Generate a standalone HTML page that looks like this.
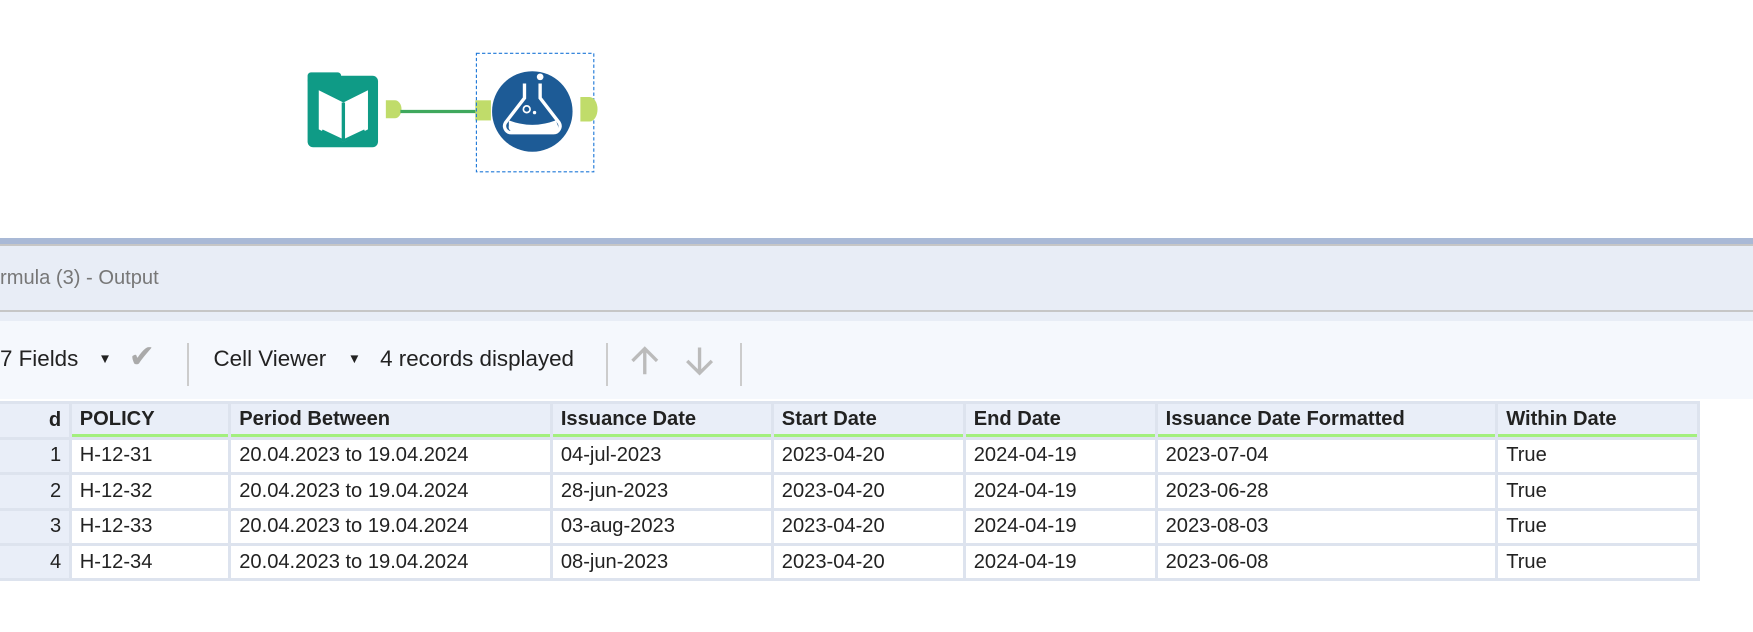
<!DOCTYPE html>
<html><head><style>
body{margin:0;width:1753px;height:631px;background:#fff;overflow:hidden;font-family:"Liberation Sans",sans-serif;}
#w{zoom:1.118;position:relative;width:1568px;height:565px}
.abs{position:absolute}
table{border-collapse:separate;border-spacing:3px;background:#dde3ee;position:absolute;left:-3px;top:359px;font-size:18px;color:#222}
td,th{padding:0 7px;white-space:nowrap;height:29px}
th{background:#e9eef8;text-align:left;font-weight:bold;border-bottom:3px solid #a3ef7e;height:26px}
td{background:#fff}
th.r,td.r{background:#e9eef8;text-align:right;border-bottom:none}
th.r{height:29px}
</style></head><body><div id="w">
<svg class="abs" style="left:270px;top:45px" width="280" height="115">
<rect x="5" y="23" width="63" height="64" rx="5" fill="#0f9b86"/>
<rect x="5" y="20" width="30" height="10" rx="3" fill="#0f9b86"/>
<path d="M15 36 L37 47 L59 36 L59 71 L37 82 L15 71Z" fill="#fff"/>
<path d="M37 47 V80" stroke="#0f9b86" stroke-width="3"/>
<path d="M18 72 L37 81 L56 72" stroke="#0f9b86" stroke-width="2" fill="none"/>
<path d="M75 45 h8 a6 8 0 0 1 0 16 h-8z" fill="#c0dc6a"/>
<path d="M88 55 H160" stroke="#3fa85d" stroke-width="3"/>
<rect x="155" y="45" width="14" height="18" fill="#c0dc6a"/>
<rect x="156" y="3" width="105" height="106" fill="none" stroke="#1e78d8" stroke-width="1" stroke-dasharray="3,2"/>
<circle cx="206" cy="55" r="36" fill="#1d5b96"/>
<path d="M199 30 v13 l-17 22 a6 6 0 0 0 5 9 h38 a6 6 0 0 0 5 -9 l-17 -22 v-13" fill="none" stroke="#fff" stroke-width="3"/>
<path d="M185 63 q21 8 42 0 l2 5 a4 4 0 0 1 -3 5 h-38 a4 4 0 0 1 -3 -5z" fill="#fff"/>
<circle cx="201" cy="53" r="3" fill="none" stroke="#fff" stroke-width="1.5"/>
<circle cx="208" cy="56" r="1.5" fill="#fff"/>
<circle cx="210" cy="15" r="3" fill="#fff"/><circle cx="213" cy="24" r="3" fill="#fff"/>
<path d="M249 42 h8 a6 9 0 0 1 0 22 h-8z" fill="#c0dc6a"/>
</svg>
<div class="abs" style="left:0;top:213px;width:1568px;height:5px;background:#a9b9d6"></div>
<div class="abs" style="left:0;top:218px;width:1568px;height:2px;background:#c6c6c6"></div>
<div class="abs" style="left:0;top:220px;width:1568px;height:57px;background:#e8edf6"></div>
<div class="abs" style="left:0;top:231px;font-size:18px;color:#777;line-height:36px">rmula (3) - Output</div>
<div class="abs" style="left:0;top:277px;width:1568px;height:2px;background:#c6c6c6"></div>
<div class="abs" style="left:0;top:279px;width:1568px;height:8px;background:#e8edf6"></div>
<div class="abs" style="left:0;top:287px;width:1568px;height:70px;background:#f5f8fd"></div>
<div class="abs" style="left:0;top:305px;font-size:20px;color:#222;line-height:32px;white-space:nowrap">
<span class="abs" style="left:0">7 Fields</span>
<span class="abs" style="left:88px;font-size:12px">▼</span>
<span class="abs" style="left:115px;color:#aaa;font-size:28px;top:-2px">✔</span>
<span class="abs" style="left:167px;top:2px;width:2px;height:38px;background:#ccc"></span>
<span class="abs" style="left:191px">Cell Viewer</span>
<span class="abs" style="left:311px;font-size:12px">▼</span>
<span class="abs" style="left:340px">4 records displayed</span>
<span class="abs" style="left:542px;top:2px;width:2px;height:38px;background:#ccc"></span>
<svg class="abs" style="left:562px;top:2px" width="80" height="32"><path d="M15 28 V5 M4 16 L15 5 L26 16 M64 4 V27 M53 16 L64 27 L75 16" fill="none" stroke="#bbb" stroke-width="3"/></svg>
<span class="abs" style="left:662px;top:2px;width:2px;height:38px;background:#ccc"></span>
</div>
<table>
<tr><th class="r" style="width:48px">d</th><th style="width:126px">POLICY</th><th style="width:271px">Period Between</th><th style="width:181px">Issuance Date</th><th style="width:155px">Start Date</th><th style="width:155px">End Date</th><th style="width:288px">Issuance Date Formatted</th><th style="width:164px">Within Date</th></tr>
<tr><td class="r">1</td><td>H-12-31</td><td>20.04.2023 to 19.04.2024</td><td>04-jul-2023</td><td>2023-04-20</td><td>2024-04-19</td><td>2023-07-04</td><td>True</td></tr>
<tr><td class="r">2</td><td>H-12-32</td><td>20.04.2023 to 19.04.2024</td><td>28-jun-2023</td><td>2023-04-20</td><td>2024-04-19</td><td>2023-06-28</td><td>True</td></tr>
<tr><td class="r">3</td><td>H-12-33</td><td>20.04.2023 to 19.04.2024</td><td>03-aug-2023</td><td>2023-04-20</td><td>2024-04-19</td><td>2023-08-03</td><td>True</td></tr>
<tr><td class="r">4</td><td>H-12-34</td><td>20.04.2023 to 19.04.2024</td><td>08-jun-2023</td><td>2023-04-20</td><td>2024-04-19</td><td>2023-06-08</td><td>True</td></tr>
</table>
</div></body></html>
